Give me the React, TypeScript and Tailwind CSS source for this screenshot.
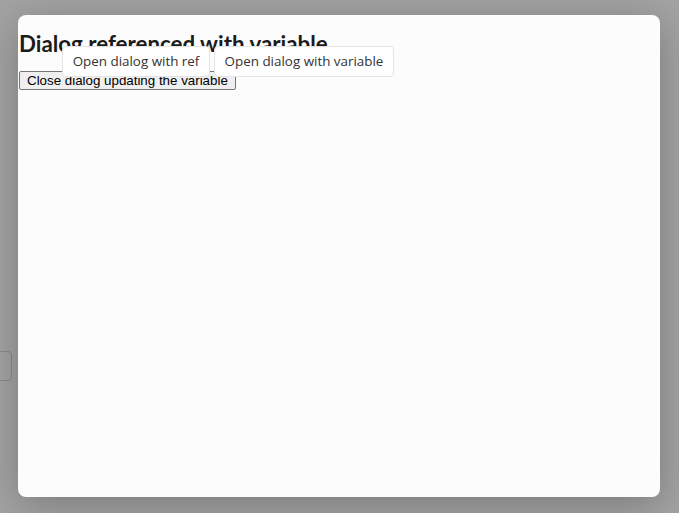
import React from 'react'

const ui = { fontFamily: '"Open Sans", "Noto Sans", sans-serif' }

export default function App() {
  return (
    <div className="relative h-[513px] w-[679px] overflow-hidden bg-white">
      {/* page content behind the backdrop */}
      <div className="absolute left-[-40px] top-[351px] h-[30px] w-[52px] rounded-[4px] border border-[#d6d6d6] bg-white" />

      {/* backdrop + dialog */}
      <div className="absolute inset-0 bg-[#000]/[0.36] pl-[18px] pt-[15px]">
        <div className="h-[482px] w-[642px] rounded-[8px] bg-[#fcfcfc] px-[1px] pt-[17px] shadow-[0_8px_40px_rgba(0,0,0,0.25)]">
          <h2
            className="text-[22.3px] font-bold leading-[24px] text-[#1b1b1b]"
            style={{ fontFamily: 'Lato, "Open Sans", sans-serif' }}
          >
            Dialog referenced with variable
          </h2>
          <button
            className="mt-[15px] h-[19px] rounded-[2px] border border-[#767676] bg-[#efefef] px-[7px] text-[13.33px] leading-[15px] text-black"
            style={{ fontFamily: '"Liberation Sans", Arial, sans-serif' }}
          >
            Close dialog updating the variable
          </button>
        </div>
      </div>

      {/* trigger buttons sitting above the modal */}
      <div className="absolute left-[62px] top-[46px] flex gap-[4px]" style={ui}>
        <button className="h-[31px] w-[148px] rounded-[4px] border border-[#e3e3e3] bg-white text-[13.4px] text-[#333]">
          Open dialog with ref
        </button>
        <button className="h-[31px] w-[180px] rounded-[4px] border border-[#e3e3e3] bg-white text-[13.4px] text-[#333]">
          Open dialog with variable
        </button>
      </div>
    </div>
  )
}
